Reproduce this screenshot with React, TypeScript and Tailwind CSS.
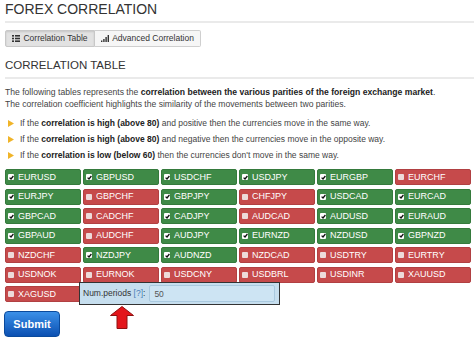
import { useState } from "react";

type Pair = { name: string; on: boolean };

// rows of the correlation table, true = positive (green, checked)
const rows: [string, boolean][][] = [
  [["EURUSD", true], ["GBPUSD", true], ["USDCHF", true], ["USDJPY", true], ["EURGBP", true], ["EURCHF", false]],
  [["EURJPY", true], ["GBPCHF", false], ["GBPJPY", true], ["CHFJPY", false], ["USDCAD", true], ["EURCAD", true]],
  [["GBPCAD", true], ["CADCHF", false], ["CADJPY", true], ["AUDCAD", false], ["AUDUSD", true], ["EURAUD", true]],
  [["GBPAUD", true], ["AUDCHF", false], ["AUDJPY", true], ["EURNZD", true], ["NZDUSD", true], ["GBPNZD", true]],
  [["NZDCHF", false], ["NZDJPY", true], ["AUDNZD", true], ["NZDCAD", false], ["USDTRY", false], ["EURTRY", false]],
  [["USDNOK", false], ["EURNOK", false], ["USDCNY", false], ["USDBRL", false], ["USDINR", false], ["XAUUSD", false]],
  [["XAGUSD", false]],
];

const pairs: Pair[] = rows.flat().map(([name, on]) => ({ name, on }));

function ListIcon() {
  return (
    <svg width="8" height="7" viewBox="0 0 8 7" className="shrink-0">
      <rect x="0" y="0" width="2" height="1.6" fill="#333" />
      <rect x="3" y="0" width="5" height="1.6" fill="#333" />
      <rect x="0" y="2.7" width="2" height="1.6" fill="#333" />
      <rect x="3" y="2.7" width="5" height="1.6" fill="#333" />
      <rect x="0" y="5.4" width="2" height="1.6" fill="#333" />
      <rect x="3" y="5.4" width="5" height="1.6" fill="#333" />
    </svg>
  );
}

function BarsIcon() {
  return (
    <svg width="8" height="7" viewBox="0 0 8 7" className="shrink-0">
      <rect x="0" y="5.5" width="1.4" height="1.5" fill="#333" />
      <rect x="2.2" y="4" width="1.4" height="3" fill="#333" />
      <rect x="4.4" y="2" width="1.4" height="5" fill="#333" />
      <rect x="6.6" y="0" width="1.4" height="7" fill="#333" />
    </svg>
  );
}

function Bullet() {
  return (
    <svg width="6" height="7" viewBox="0 0 6 7" className="shrink-0">
      <polygon points="0,0 6,3.5 0,7" fill="#f0b429" />
    </svg>
  );
}

function Tile({ pair }: { pair: Pair }) {
  return (
    <div
      className={
        pair.on
          ? "h-[16px] rounded-[2px] bg-[#3f8a47] border border-[#357a3c] flex items-center pl-[2px] text-white text-[9px] leading-none"
          : "h-[16px] rounded-[2px] bg-[#c64a4b] border border-[#b14042] flex items-center pl-[2px] text-white text-[9px] leading-none"
      }
    >
      <span
        className={
          pair.on
            ? "w-[6px] h-[6px] bg-white rounded-[1px] flex items-center justify-center mr-[4px]"
            : "w-[6px] h-[6px] bg-[#eddada] rounded-[1px] mr-[4px]"
        }
      >
        {pair.on && (
          <svg width="5" height="5" viewBox="0 0 5 5">
            <path d="M0.6 2.6 L2 4 L4.4 1" stroke="#111" strokeWidth="1.3" fill="none" />
          </svg>
        )}
      </span>
      {pair.name}
    </div>
  );
}

export default function App() {
  const [periods, setPeriods] = useState("50");

  return (
    <div className="w-[474px] h-[341px] overflow-hidden bg-white text-[#333] font-['Liberation_Sans',Arial,sans-serif] pl-[5px] pr-[3px]">
      {/* Title */}
      <h1 className="text-[14px] leading-[16px] pt-[1px] text-[#333]">FOREX CORRELATION</h1>
      <div className="mt-[4px] -mr-[3px] border-b-2 border-[#eaeaea]"></div>

      {/* Tab buttons */}
      <div className="mt-[7px] flex">
        <div className="h-[17px] w-[90px] flex items-center justify-center gap-[3px] bg-[#e2e2e2] border border-[#c8c8c8] rounded-l-[2px] text-[8.5px] shadow-[inset_0_1px_2px_rgba(0,0,0,0.12)]">
          <ListIcon />
          Correlation Table
        </div>
        <div className="h-[17px] w-[106px] flex items-center justify-center gap-[3px] bg-[#f6f6f6] border border-l-0 border-[#cfcfcf] rounded-r-[2px] text-[8.5px]">
          <BarsIcon />
          Advanced Correlation
        </div>
      </div>

      {/* Section title */}
      <h2 className="mt-[11px] text-[11.5px] leading-[14px] text-[#333]">CORRELATION TABLE</h2>
      <div className="mt-[5px] -mr-[3px] border-b-2 border-[#eaeaea]"></div>

      {/* Description */}
      <div className="mt-[7px] text-[8.6px] leading-[12px] text-[#444]">
        <p>
          The following tables represents the{" "}
          <b className="text-[#222]">correlation between the various parities of the foreign exchange market</b>.
        </p>
        <p>The correlation coefficient highlights the similarity of the movements between two parities.</p>
      </div>

      <ul className="mt-[5px] text-[8.5px] leading-[16px] text-[#444]">
        <li className="flex items-center gap-[6px] pl-[3px]">
          <Bullet />
          <span>
            If the <b className="text-[#222]">correlation is high (above 80)</b> and positive then the currencies move in the same way.
          </span>
        </li>
        <li className="flex items-center gap-[6px] pl-[3px]">
          <Bullet />
          <span>
            If the <b className="text-[#222]">correlation is high (above 80)</b> and negative then the currencies move in the opposite way.
          </span>
        </li>
        <li className="flex items-center gap-[6px] pl-[3px]">
          <Bullet />
          <span>
            If the <b className="text-[#222]">correlation is low (below 60)</b> then the currencies don't move in the same way.
          </span>
        </li>
      </ul>

      {/* Pairs grid */}
      <div className="relative mt-[6px]">
        <div className="grid grid-cols-6 gap-x-[2px] gap-y-[3.5px]">
          {pairs.map((p) => (
            <Tile key={p.name} pair={p} />
          ))}
        </div>

        {/* Num periods popup */}
        <div className="absolute left-[74px] top-[113px] w-[201px] h-[23px] bg-[#c6deee] border border-[#333] flex items-center pl-[3px] pr-[4px] text-[8.5px] text-[#333]">
          <span className="whitespace-nowrap">
            Num.periods <span className="text-[#4b7fb8]">[?]</span>:
          </span>
          <input
            value={periods}
            onChange={(e) => setPeriods(e.target.value)}
            className="ml-[4px] flex-1 h-[17px] bg-[#cde4f3] border border-[#a9c9df] rounded-[2px] px-[4px] text-[8.5px] text-[#555] outline-none"
          />
        </div>

        {/* Red arrow */}
        <svg
          width="24"
          height="23"
          viewBox="0 0 24 23"
          className="absolute left-[105px] top-[137px]"
        >
          <polygon
            points="12,0.5 23.5,9.5 17,9.5 17,22.5 7,22.5 7,9.5 0.5,9.5"
            fill="#e3161b"
            stroke="#8f1010"
            strokeWidth="1"
          />
        </svg>
      </div>

      {/* Submit */}
      <button className="mt-[9px] -ml-[1px] w-[56px] h-[26px] rounded-[4px] bg-gradient-to-b from-[#3b90e8] to-[#0b50b2] border border-[#0a4a9c] text-white font-bold text-[11px]">
        Submit
      </button>
    </div>
  );
}
